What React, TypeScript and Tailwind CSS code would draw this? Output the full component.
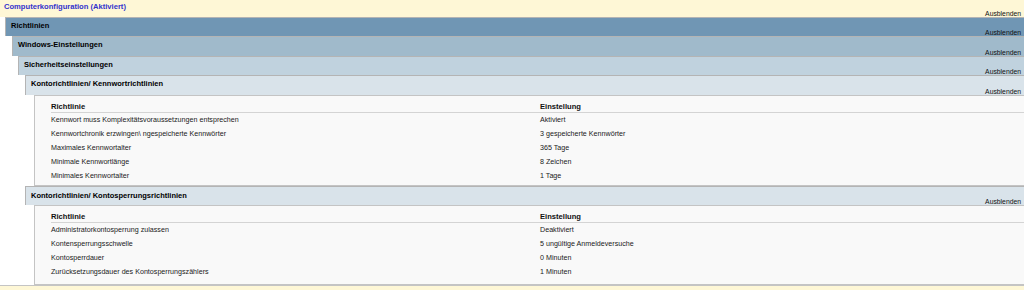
const kennwort = [
  ["Kennwort muss Komplexitätsvoraussetzungen entsprechen", "Aktiviert"],
  ["Kennwortchronik erzwingen\\ ngespeicherte Kennwörter", "3 gespeicherte Kennwörter"],
  ["Maximales Kennwortalter", "365 Tage"],
  ["Minimale Kennwortlänge", "8 Zeichen"],
  ["Minimales Kennwortalter", "1 Tage"],
];

const sperrung = [
  ["Administratorkontosperrung zulassen", "Deaktiviert"],
  ["Kontensperrungsschwelle", "5 ungültige Anmeldeversuche"],
  ["Kontosperrdauer", "0 Minuten"],
  ["Zurücksetzungsdauer des Kontosperrungszählers", "1 Minuten"],
];

function Band({ title, bg, h, pt = "pt-[2px]" }: { title: string; bg: string; h: string; pt?: string }) {
  return (
    <div className={`flex justify-between border-l border-t border-[#b4b4b4] pl-[5px] pr-[3px] ${bg} ${h}`}>
      <span className={`${pt} text-[7.5px] font-bold leading-[11px] text-black`}>{title}</span>
      <span className="self-end mb-[-1px] text-[6.8px] leading-[8px] text-[#111]">Ausblenden</span>
    </div>
  );
}

function Table({ rows, pb }: { rows: string[][]; pb: string }) {
  return (
    <div className={`ml-[9px] border-l border-t border-b border-[#c4c4c4] bg-[#f9f9f9] pl-[16px] ${pb}`}>
      <div className="grid grid-cols-[489px_1fr] border-b border-[#d4d4d4] pt-[6px] text-[7.6px] font-bold leading-[10px] text-[#111]">
        <span>Richtlinie</span>
        <span>Einstellung</span>
      </div>
      {rows.map(([a, b]) => (
        <div key={a} className="grid h-[14px] grid-cols-[489px_1fr] items-center text-[7.15px] leading-[9px] text-[#1a1a1a]">
          <span>{a}</span>
          <span>{b}</span>
        </div>
      ))}
    </div>
  );
}

export default function App() {
  return (
    <div className="h-[290px] w-[1024px] overflow-hidden bg-white font-['Liberation_Sans',Arial,sans-serif]">
      <div className="flex h-[17px] justify-between bg-[#fef7d6] pl-[4px] pr-[3px]">
        <span className="pt-[1px] text-[7.6px] font-bold leading-[11px] text-[#3333cc]">Computerkonfiguration (Aktiviert)</span>
        <span className="self-end mb-[-1px] text-[6.8px] leading-[8px] text-[#111]">Ausblenden</span>
      </div>
      <div className="ml-[5px]">
        <Band title="Richtlinien" bg="bg-[#7096b4]" h="h-[19px]" />
        <div className="ml-[7px]">
          <Band title="Windows-Einstellungen" bg="bg-[#a0bacb]" h="h-[20px]" />
          <div className="ml-[6px]">
            <Band title="Sicherheitseinstellungen" bg="bg-[#c0d2de]" h="h-[19px]" />
            <div className="ml-[7px]">
              <Band title="Kontorichtlinien/ Kennwortrichtlinien" bg="bg-[#d9e3ea]" h="h-[20px]" />
              <Table rows={kennwort} pb="pb-[2px]" />
              <Band title="Kontorichtlinien/ Kontosperrungsrichtlinien" bg="bg-[#d9e3ea]" h="h-[19px]" pt="pt-[3px]" />
              <Table rows={sperrung} pb="pb-[5px]" />
            </div>
          </div>
        </div>
      </div>
      <div className="h-[10px] border-t border-[#c4c4c4] bg-[#fef7d6]" />
    </div>
  );
}
